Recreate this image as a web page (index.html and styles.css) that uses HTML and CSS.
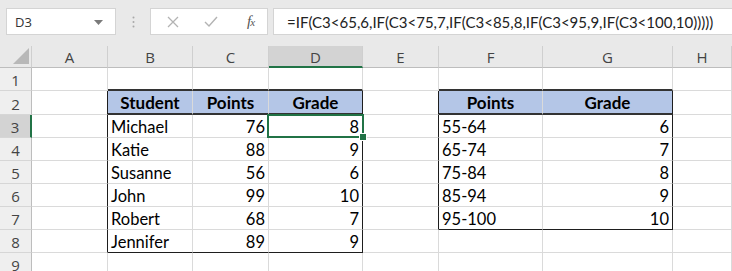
FILE: index.html
```html
<!DOCTYPE html>
<html>
<head>
<meta charset="utf-8">
<link rel="stylesheet" href="styles.css">
</head>
<body>
<div class="toolbar">
  <div class="namebox">
    <span class="nb-text">D3</span>
    <svg class="nb-arrow" width="9" height="5" viewBox="0 0 9 5"><path d="M0 0H9L4.5 5Z" fill="#7a7a7a"/></svg>
  </div>
  <div class="sep">
    <svg width="3" height="12" viewBox="0 0 3 12"><circle cx="1.5" cy="1.5" r="1" fill="#a8a8a8"/><circle cx="1.5" cy="6" r="1" fill="#a8a8a8"/><circle cx="1.5" cy="10.5" r="1" fill="#a8a8a8"/></svg>
  </div>
  <div class="btns">
    <svg class="ico" width="12" height="12" viewBox="0 0 12 12"><path d="M1 1L11 11M11 1L1 11" stroke="#b3b3b3" stroke-width="1.3" fill="none"/></svg>
    <svg class="ico" width="14" height="11" viewBox="0 0 14 11"><path d="M1 6L5 10L13 1" stroke="#b3b3b3" stroke-width="1.4" fill="none"/></svg>
    <span class="fx"><i>f</i><i class="fx-x">x</i></span>
  </div>
  <div class="formula">=IF(C3&lt;65,6,IF(C3&lt;75,7,IF(C3&lt;85,8,IF(C3&lt;95,9,IF(C3&lt;100,10)))))</div>
</div>
<div class="sheet">
  <!-- header row -->
  <div class="ch corner"><svg width="16" height="16" viewBox="0 0 16 16"><path d="M16 0V16H0Z" fill="#b8b8b8"/></svg></div>
  <div class="ch">A</div>
  <div class="ch">B</div>
  <div class="ch">C</div>
  <div class="ch ch-sel">D</div>
  <div class="ch">E</div>
  <div class="ch">F</div>
  <div class="ch">G</div>
  <div class="ch">H</div>

  <!-- row 1 -->
  <div class="rh">1</div>
  <div class="c"></div>
  <div class="c bb2"></div>
  <div class="c bb2"></div>
  <div class="c bb2"></div>
  <div class="c"></div>
  <div class="c bb2"></div>
  <div class="c bb2"></div>
  <div class="c"></div>

  <!-- row 2 -->
  <div class="rh">2</div>
  <div class="c br"></div>
  <div class="c hd bb2">Student</div>
  <div class="c hd bb2">Points</div>
  <div class="c hd bb2 br">Grade</div>
  <div class="c br"></div>
  <div class="c hd bb2">Points</div>
  <div class="c hd bb2 br">Grade</div>
  <div class="c"></div>

  <!-- row 3 -->
  <div class="rh rh-sel">3</div>
  <div class="c br"></div>
  <div class="c t">Michael</div>
  <div class="c n">76</div>
  <div class="c n br sel">8<span class="handle"></span></div>
  <div class="c br"></div>
  <div class="c t">55-64</div>
  <div class="c n br">6</div>
  <div class="c"></div>

  <!-- row 4 -->
  <div class="rh">4</div>
  <div class="c br"></div>
  <div class="c t">Katie</div>
  <div class="c n">88</div>
  <div class="c n br">9</div>
  <div class="c br"></div>
  <div class="c t">65-74</div>
  <div class="c n br">7</div>
  <div class="c"></div>

  <!-- row 5 -->
  <div class="rh">5</div>
  <div class="c br"></div>
  <div class="c t">Susanne</div>
  <div class="c n">56</div>
  <div class="c n br">6</div>
  <div class="c br"></div>
  <div class="c t">75-84</div>
  <div class="c n br">8</div>
  <div class="c"></div>

  <!-- row 6 -->
  <div class="rh">6</div>
  <div class="c br"></div>
  <div class="c t">John</div>
  <div class="c n">99</div>
  <div class="c n br">10</div>
  <div class="c br"></div>
  <div class="c t">85-94</div>
  <div class="c n br">9</div>
  <div class="c"></div>

  <!-- row 7 -->
  <div class="rh">7</div>
  <div class="c br"></div>
  <div class="c t">Robert</div>
  <div class="c n">68</div>
  <div class="c n br">7</div>
  <div class="c br"></div>
  <div class="c t bb">95-100</div>
  <div class="c n br bb">10</div>
  <div class="c"></div>

  <!-- row 8 -->
  <div class="rh">8</div>
  <div class="c br"></div>
  <div class="c t bb">Jennifer</div>
  <div class="c n bb">89</div>
  <div class="c n br bb">9</div>
  <div class="c"></div>
  <div class="c"></div>
  <div class="c"></div>
  <div class="c"></div>

  <!-- row 9 -->
  <div class="rh">9</div>
  <div class="c"></div>
  <div class="c"></div>
  <div class="c"></div>
  <div class="c"></div>
  <div class="c"></div>
  <div class="c"></div>
  <div class="c"></div>
  <div class="c"></div>
</div>
</body>
</html>
```

FILE: styles.css
```css
html, body {
  margin: 0;
  padding: 0;
  background: #ffffff;
  overflow: hidden;
}

body {
  width: 732px;
  height: 271px;
  font-family: "Lato", "Open Sans", sans-serif;
}

.toolbar {
  height: 46px;
  box-sizing: border-box;
  padding-top: 8px;
  background: #e9e9e9;
  display: flex;
  align-items: flex-start;
}

.namebox {
  margin-left: 6px;
  width: 110px;
  height: 27px;
  box-sizing: border-box;
  background: #fff;
  border: 1px solid #d4d4d4;
  display: flex;
  align-items: center;
  justify-content: space-between;
  padding: 0 12px 0 8px;
  font-family: "Open Sans", sans-serif;
  font-size: 13px;
  color: #333;
}

.nb-arrow {
  margin-top: 1px;
}

.sep {
  width: 34px;
  height: 27px;
  display: flex;
  align-items: center;
  justify-content: center;
}

.btns {
  width: 118px;
  height: 27px;
  box-sizing: border-box;
  background: #fff;
  border: 1px solid #d4d4d4;
  display: flex;
  align-items: center;
  padding-left: 16px;
  gap: 25px;
}

.fx {
  font-family: "Liberation Serif", serif;
  font-size: 15px;
  color: #555;
  margin-left: 4px;
  letter-spacing: -1px;
}

.fx-x {
  font-size: 11px;
}

.formula {
  margin-left: 5px;
  flex: 1;
  height: 27px;
  box-sizing: border-box;
  background: #fff;
  border: 1px solid #d4d4d4;
  border-right: none;
  padding-left: 13px;
  display: flex;
  align-items: center;
  font-family: "Lato", sans-serif;
  font-size: 15px;
  color: #222;
  white-space: nowrap;
}

.sheet {
  display: grid;
  grid-template-columns: 32px 76px 85px 76px 94px 76px 104px 130px 59px;
  grid-template-rows: 22px 23px 24px repeat(7, 23px);
}

.ch, .rh, .c {
  box-sizing: border-box;
  border-right: 1px solid #dadada;
  border-bottom: 1px solid #dadada;
}

.ch {
  background: #e9e9e9;
  border-right-color: #cfcfcf;
  border-bottom-color: #bdbdbd;
  display: flex;
  align-items: center;
  justify-content: center;
  font-family: "Open Sans", sans-serif;
  font-size: 15px;
  color: #444;
  padding-top: 1px;
}

.corner {
  justify-content: flex-end;
  align-items: flex-end;
  padding: 0 2px 3px 0;
}

.ch-sel {
  background: #d3d3d3;
  border-bottom: 2px solid #217346;
}

.rh {
  background: #efefef;
  border-right-color: #bdbdbd;
  border-bottom-color: #d6d6d6;
  display: flex;
  align-items: center;
  justify-content: center;
  font-family: "Open Sans", sans-serif;
  font-size: 15px;
  color: #444;
  padding-top: 2px;
}

.rh-sel {
  background: #d3d3d3;
  border-right: 2px solid #217346;
}

.c {
  display: flex;
  align-items: center;
  font-size: 16.5px;
  color: #000;
  white-space: nowrap;
  padding-top: 2px;
}

.t {
  padding-left: 3px;
}

.n {
  justify-content: flex-end;
  padding-right: 3px;
}

.hd {
  background: #b4c6e7;
  justify-content: center;
  font-weight: bold;
  font-size: 17px;
  padding-top: 1px;
}

.br {
  border-right: 1px solid #1e1e1e;
}

.bb {
  border-bottom: 1px solid #1e1e1e;
}

.bb2 {
  border-bottom: 2px solid #333;
}

.sel {
  position: relative;
}

.sel::after {
  content: "";
  position: absolute;
  left: -2px;
  top: -1px;
  right: -2px;
  bottom: -1px;
  border: 2px solid #217346;
  pointer-events: none;
}

.handle {
  position: absolute;
  right: -5px;
  bottom: -4px;
  width: 6px;
  height: 6px;
  background: #217346;
  border: 1px solid #fff;
  z-index: 2;
}
```
